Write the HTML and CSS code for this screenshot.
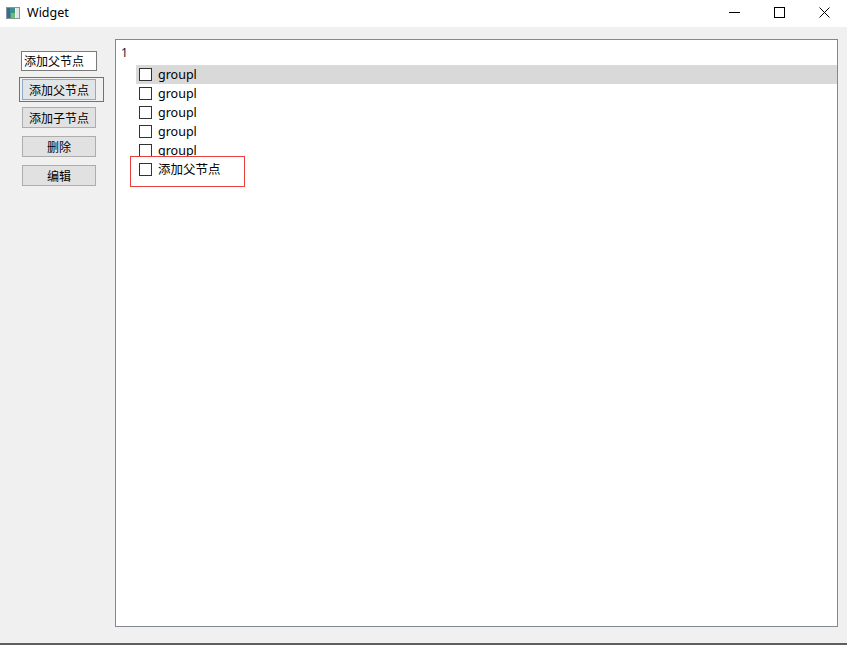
FILE: index.html
```html
<!DOCTYPE html>
<html lang="zh-CN">
<head>
<meta charset="utf-8">
<title>Widget</title>
<link rel="stylesheet" href="styles.css">
</head>
<body>
<div class="window">
  <div class="titlebar">
    <div class="title-left">
      <svg class="app-icon" width="14" height="12" viewBox="0 0 14 12">
        <rect x="0.5" y="0.5" width="13" height="11" fill="#f4f4f4" stroke="#8a949c"/>
        <rect x="1" y="1" width="8" height="10" fill="#3d8f8a"/>
        <rect x="1" y="1" width="3" height="10" fill="#2f6f9a"/>
        <rect x="5" y="6" width="4" height="5" fill="#6fbf6a"/>
        <rect x="10" y="1" width="3" height="10" fill="#dfe6ea"/>
      </svg>
      <span class="title-text">Widget</span>
    </div>
    <div class="controls">
      <div class="ctl">
        <svg width="11" height="11" viewBox="0 0 11 11"><line x1="0" y1="5.5" x2="11" y2="5.5" stroke="#000" stroke-width="1"/></svg>
      </div>
      <div class="ctl">
        <svg width="11" height="11" viewBox="0 0 11 11"><rect x="0.5" y="0.5" width="10" height="10" fill="none" stroke="#000" stroke-width="1"/></svg>
      </div>
      <div class="ctl">
        <svg width="11" height="11" viewBox="0 0 11 11"><path d="M0.5 0.5 L10.5 10.5 M10.5 0.5 L0.5 10.5" stroke="#000" stroke-width="1" fill="none"/></svg>
      </div>
    </div>
  </div>
  <div class="client">
    <div class="side">
      <div class="edit">添加父节点</div>
      <div class="btn focus">添加父节点</div>
      <div class="btn">添加子节点</div>
      <div class="btn">删除</div>
      <div class="btn">编辑</div>
      <div class="mark mark-btn"></div>
    </div>
    <div class="tree">
      <div class="root">1</div>
      <div class="children">
        <div class="row sel"><span class="cb"></span><span class="lbl">groupl</span></div>
        <div class="row"><span class="cb"></span><span class="lbl">groupl</span></div>
        <div class="row"><span class="cb"></span><span class="lbl">groupl</span></div>
        <div class="row"><span class="cb"></span><span class="lbl">groupl</span></div>
        <div class="row"><span class="cb"></span><span class="lbl">groupl</span></div>
        <div class="row top"><span class="cb"></span><span class="lbl">添加父节点</span></div>
      </div>
      <div class="mark mark-item"></div>
    </div>
  </div>
  <div class="taskedge"></div>
</div>
</body>
</html>
```

FILE: styles.css
```css
* { box-sizing: border-box; }
html, body { margin: 0; padding: 0; }
body {
  width: 847px;
  height: 645px;
  overflow: hidden;
  background: #f0f0f0;
  font-family: "Noto Sans", "Noto Sans CJK SC", sans-serif;
  font-size: 12px;
  color: #000;
}
.window {
  display: flex;
  flex-direction: column;
  height: 645px;
}
.titlebar {
  height: 27px;
  background: #fff;
  display: flex;
  justify-content: space-between;
  align-items: stretch;
}
.title-left {
  display: flex;
  align-items: center;
  padding-left: 6px;
}
.app-icon { display: block; margin-top: -2px; }
.title-text {
  margin-left: 7px;
  font-family: "Noto Sans", sans-serif;
  font-size: 12.5px;
  margin-top: -2px;
}
.controls { display: flex; }
.ctl {
  width: 45px;
  display: flex;
  align-items: center;
  justify-content: center;
  padding-bottom: 2px;
}
.ctl svg { display: block; }
.client {
  flex: 1;
  display: flex;
  padding: 12px 9px 0 21px;
}
.side {
  position: relative;
  width: 94px;
  flex: none;
  padding-top: 12px;
}
.edit {
  width: 76px;
  height: 20px;
  border: 1px solid #7a7a7a;
  background: #fff;
  line-height: 18px;
  padding-left: 2px;
  font-family: "Noto Sans CJK SC", sans-serif;
  font-size: 12px;
  white-space: nowrap;
  overflow: hidden;
}
.btn {
  width: 74px;
  height: 21px;
  margin-left: 1px;
  margin-top: 8px;
  border: 1px solid #adadad;
  background: #e1e1e1;
  text-align: center;
  line-height: 19px;
  font-family: "Noto Sans CJK SC", sans-serif;
  font-size: 12px;
  white-space: nowrap;
}
.btn.focus {
  border-color: #8ea9c6;
  background: #e2e5e8;
}
.btn + .btn { margin-top: 7px; }
.btn + .btn + .btn { margin-top: 8px; }
.mark {
  position: absolute;
  border: 1px solid #e8403c;
  pointer-events: none;
}
.mark-btn {
  left: -2px;
  top: 38px;
  width: 85px;
  height: 25px;
}
.tree {
  position: relative;
  flex: 1;
  height: 588px;
  border: 1px solid #828790;
  background: #fff;
}
.root {
  height: 19px;
  margin-top: 3px;
  padding-left: 5px;
  line-height: 19px;
  color: #10243c;
}
.children {
  margin-top: 3px;
  margin-left: 20px;
}
.row {
  height: 19px;
  display: flex;
  align-items: center;
  padding-left: 3px;
  white-space: nowrap;
}
.row.sel { background: #d9d9d9; }
.row.top { position: relative; z-index: 2; }
.cb {
  width: 13px;
  height: 13px;
  border: 1px solid #333;
  background: #fff;
  flex: none;
}
.lbl {
  margin-left: 6px;
  font-family: "Noto Sans", "Noto Sans CJK SC", sans-serif;
  font-size: 12.5px;
  line-height: 19px;
}
.mark-item {
  left: 14px;
  top: 116px;
  width: 115px;
  height: 31px;
  background: #fff;
  z-index: 1;
}
.taskedge {
  height: 2px;
  background: #5e5e5e;
}
```
